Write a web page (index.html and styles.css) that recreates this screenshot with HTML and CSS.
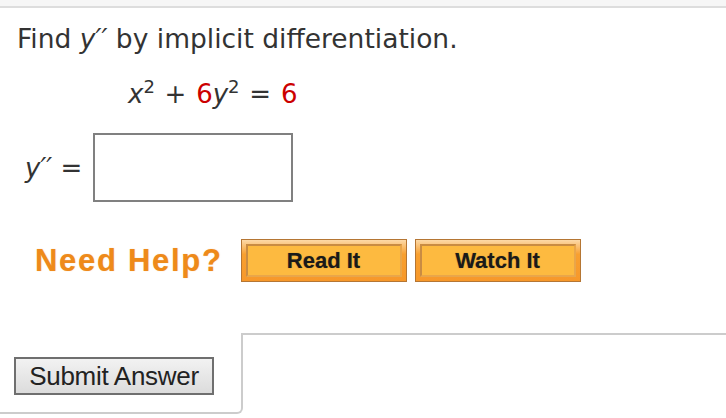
FILE: index.html
```html
<!DOCTYPE html>
<html lang="en">

<head>
    <meta charset="UTF-8">
    <title>Implicit Differentiation</title>
    <link rel="stylesheet" href="styles.css">
</head>

<body>
    <div class="topbar"></div>

    <div class="question">
        <p class="prompt">Find <i>y′′</i> by implicit differentiation.</p>
        <p class="equation">
            <i>x</i><sup>2</sup> + <span class="red">6</span><i>y</i><sup>2</sup> = <span class="red">6</span>
        </p>

        <div class="answer">
            <span class="answer-label"><i>y′′</i> =</span>
            <input type="text" class="answer-box">
        </div>

        <div class="help">
            <span class="help-title">Need Help?</span>
            <button class="help-btn"><span>Read It</span></button>
            <button class="help-btn"><span>Watch It</span></button>
        </div>
    </div>

    <div class="footer">
        <div class="footer-left">
            <button class="submit">Submit Answer</button>
        </div>
        <div class="footer-right"></div>
    </div>
</body>

</html>
```

FILE: styles.css
```css
body {
    margin: 0;
    padding: 0;
    background-color: #ffffff;
    font-family: "DejaVu Sans", Verdana, sans-serif;
    color: #333;
}

.topbar {
    height: 6px;
    background-color: #f6f6f6;
    border-bottom: 2px solid #dddddd;
}

.question {
    padding-left: 17px;
}

.prompt {
    margin: 0;
    padding-top: 16px;
    font-size: 26.5px;
    line-height: 30px;
}

.equation {
    margin: 25px 0 0 111px;
    font-size: 26px;
    line-height: 30px;
    word-spacing: 1.5px;
}

.equation sup {
    font-size: 18px;
    line-height: 0;
}

.red {
    color: #cc0000;
}

.answer {
    display: flex;
    align-items: center;
    margin-top: 24px;
}

.answer-label {
    font-size: 26px;
    margin-left: 8px;
    width: 68px;
}

.answer-box {
    box-sizing: border-box;
    width: 200px;
    height: 69px;
    margin: 0;
    border: 2px solid #808080;
    background: #fff;
}

.help {
    display: flex;
    align-items: center;
    margin-top: 37px;
    height: 43px;
}

.help-title {
    font-family: "Liberation Sans", Arial, sans-serif;
    font-weight: bold;
    font-size: 31px;
    letter-spacing: 1.7px;
    color: #ee8a1a;
    margin-left: 18px;
    margin-right: 18px;
    text-shadow: 0 0 1px rgba(238, 138, 26, 0.5);
}

.help-btn {
    box-sizing: border-box;
    width: 166px;
    height: 43px;
    margin: 0 8px 0 0;
    padding: 4px;
    border: 1px solid #b57634;
    background: linear-gradient(#fcd9a8, #f8a030 35%, #f7982a);
    cursor: pointer;
}

.help-btn span {
    display: flex;
    align-items: center;
    justify-content: center;
    height: 100%;
    box-sizing: border-box;
    border: 2px solid #c98c43;
    border-right-color: #e9a64a;
    border-bottom-color: #e9a64a;
    background-color: #fdba40;
    font-family: "Liberation Sans", Arial, sans-serif;
    font-weight: bold;
    font-size: 22px;
    color: #1a1a1a;
    text-shadow: 0 0 1px rgba(0, 0, 0, 0.4);
}

.footer {
    display: flex;
    margin-top: 51px;
}

.footer-left {
    box-sizing: border-box;
    width: 243px;
    height: 81px;
    border-right: 2px solid #cccccc;
    border-bottom: 2px solid #cccccc;
    border-bottom-right-radius: 6px;
    padding-top: 24px;
}

.footer-right {
    flex: 1;
    border-top: 2px solid #cccccc;
}

.submit {
    margin-left: 14px;
    width: 200px;
    height: 38px;
    border: 2px solid #6f6f6f;
    background: linear-gradient(#f2f2f2, #dcdcdc);
    font-family: "Liberation Sans", Arial, sans-serif;
    font-size: 26px;
    letter-spacing: -0.3px;
    color: #222;
    padding: 0;
}
```
